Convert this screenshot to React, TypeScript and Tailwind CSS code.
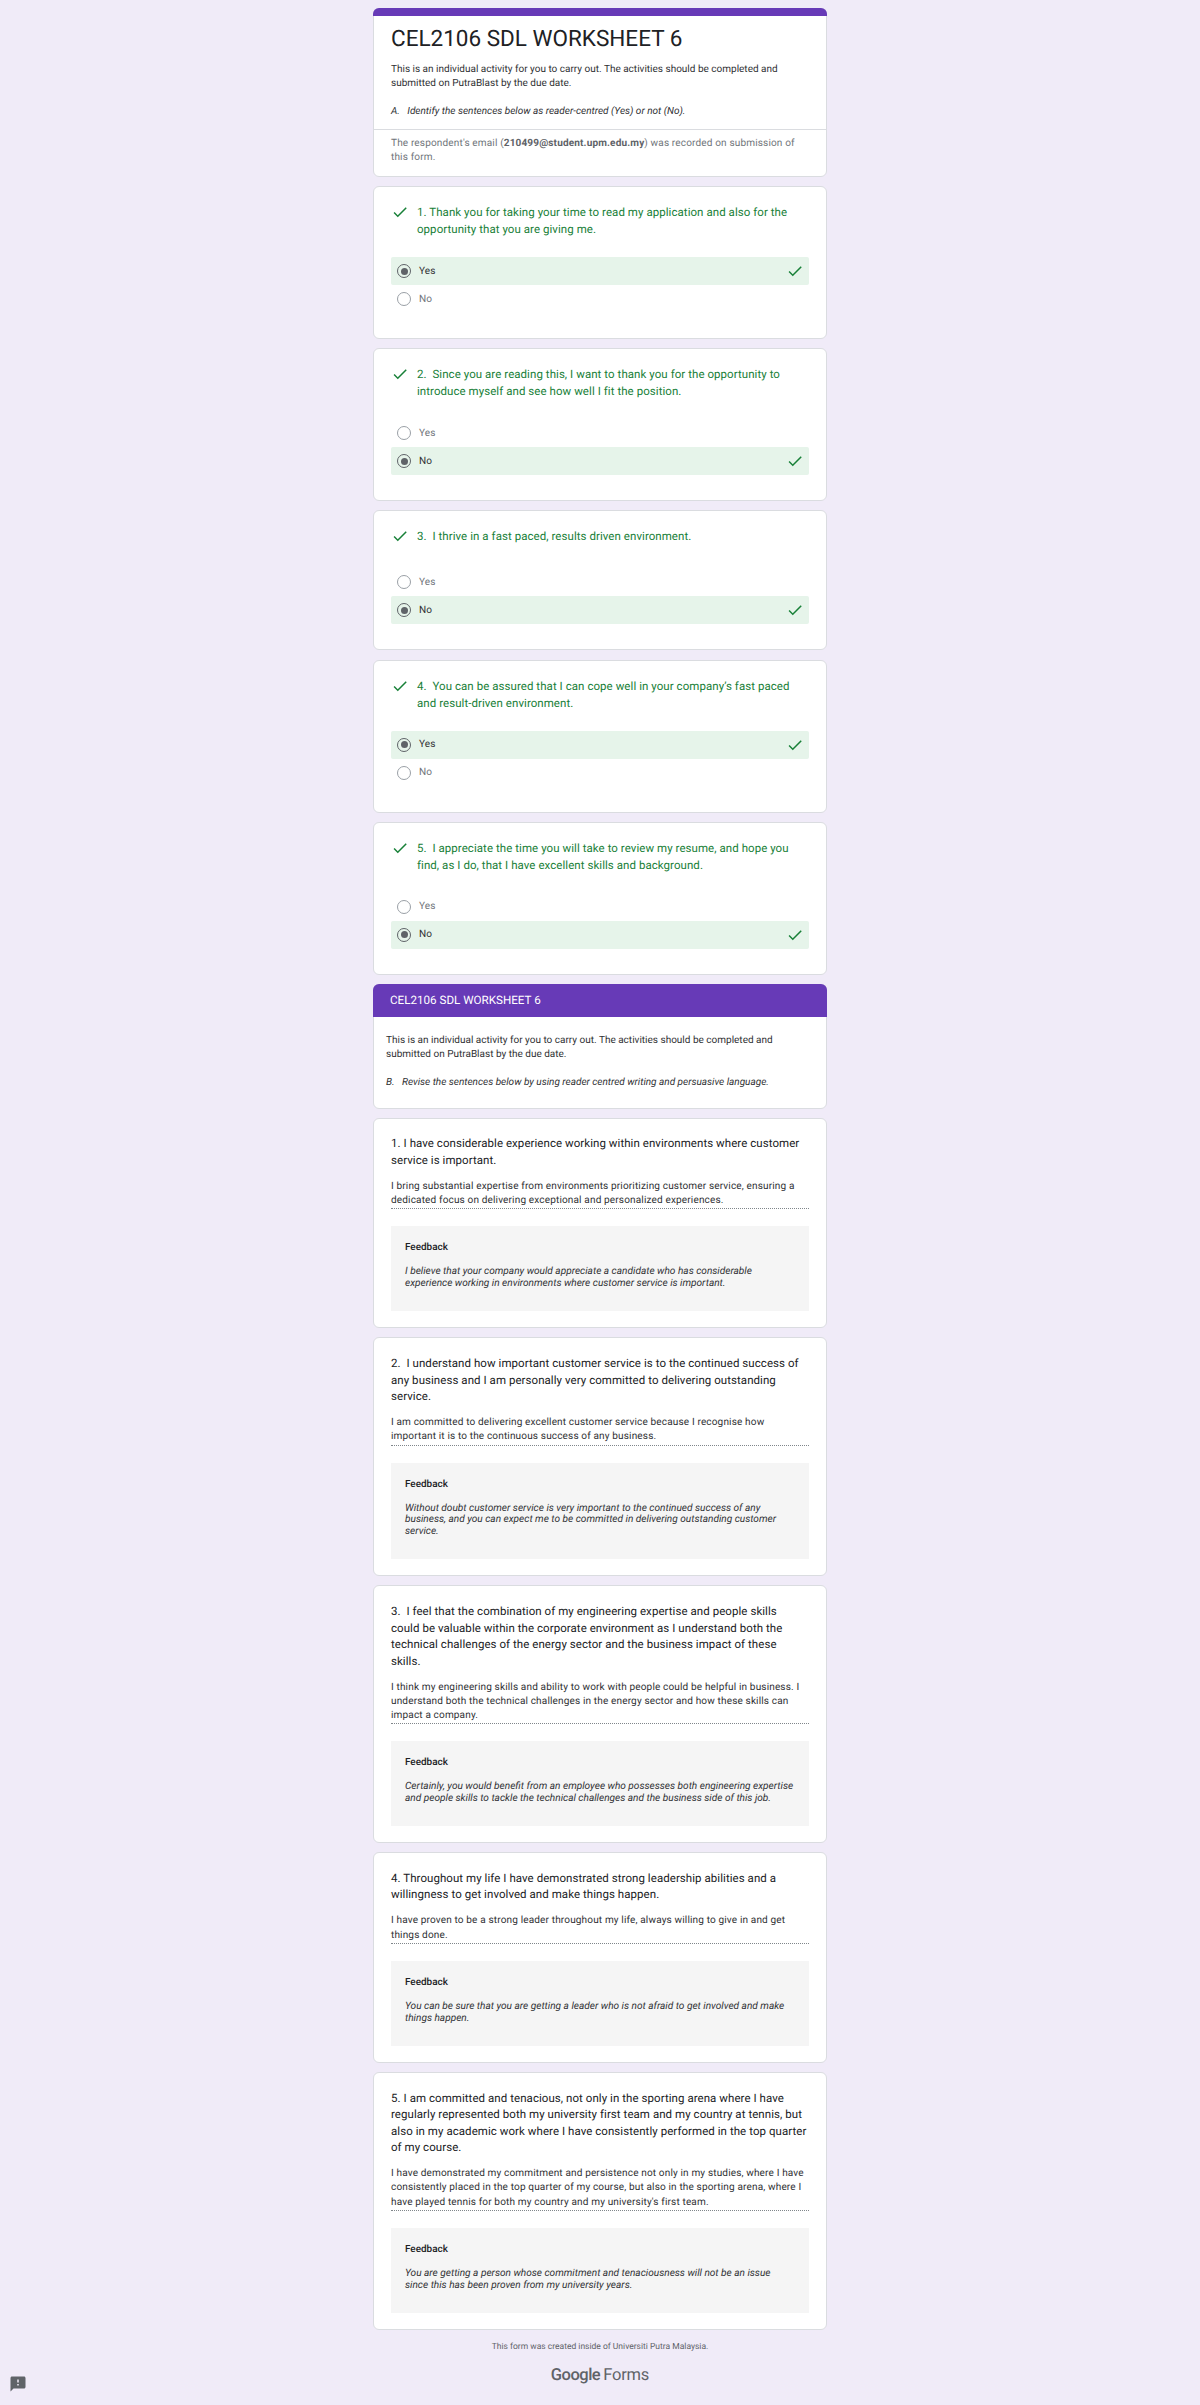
const CheckIcon = ({ className }: { className: string }) => (
  <svg viewBox="0 0 24 24" className={className} fill="#188038">
    <path d="M9 16.17L4.83 12l-1.41 1.41L9 19 21 7l-1.41-1.41z" />
  </svg>
);

const Radio = ({ on }: { on: boolean }) => (
  <span
    className={`flex h-[14px] w-[14px] shrink-0 items-center justify-center rounded-full border-[1.5px] ${
      on ? "border-[#5f6368]" : "border-[#9aa0a6]"
    }`}
  >
    {on && <span className="h-[7px] w-[7px] rounded-full bg-[#5f6368]" />}
  </span>
);

const Option = ({ label, on }: { label: string; on: boolean }) => (
  <div className={`flex h-[28px] items-center rounded-[2px] pl-[6px] pr-[5px] ${on ? "bg-[#e6f4ea]" : ""}`}>
    <Radio on={on} />
    <span className={`ml-[8px] mt-[1px] flex-1 text-[10.05px] leading-[14px] tracking-[0.14px] ${on ? "text-[#303134]" : "text-[#70757a]"}`}>{label}</span>
    {on && <CheckIcon className="h-[18px] w-[18px]" />}
  </div>
);

const quiz = [
  { q: "1. Thank you for taking your time to read my application and also for the opportunity that you are giving me.", a: "Yes", cls: "mt-[19px]" },
  { q: "2.  Since you are reading this, I want to thank you for the opportunity to introduce myself and see how well I fit the position.", a: "No", cls: "mt-[19px]" },
  { q: "3.  I thrive in a fast paced, results driven environment.", a: "No", cls: "mt-[23px]" },
  { q: "4.  You can be assured that I can cope well in your company’s fast paced and result-driven environment.", a: "Yes", cls: "mt-[19px]" },
  { q: "5.  I appreciate the time you will take to review my resume, and hope you find, as I do, that I have excellent skills and background.", a: "No", cls: "mt-[19px]" },
];

const written = [
  {
    q: "1. I have considerable experience working within environments where customer service is important.",
    a: "I bring substantial expertise from environments prioritizing customer service, ensuring a dedicated focus on delivering exceptional and personalized experiences.",
    f: "I believe that your company would appreciate a candidate who has considerable experience working in environments where customer service is important.",
  },
  {
    q: "2.  I understand how important customer service is to the continued success of any business and I am personally very committed to delivering outstanding service.",
    a: "I am committed to delivering excellent customer service because I recognise how important it is to the continuous success of any business.",
    f: "Without doubt customer service is very important to the continued success of any business, and you can expect me to be committed in delivering outstanding customer service.",
  },
  {
    q: "3.  I feel that the combination of my engineering expertise and people skills\ncould be valuable within the corporate environment as I understand both the\ntechnical challenges of the energy sector and the business impact of these\nskills.",
    a: "I think my engineering skills and ability to work with people could be helpful in business. I understand both the technical challenges in the energy sector and how these skills can impact a company.",
    f: "Certainly, you would benefit from an employee who possesses both engineering expertise and people skills to tackle the technical challenges and the business side of this job.",
  },
  {
    q: "4. Throughout my life I have demonstrated strong leadership abilities and a willingness to get involved and make things happen.",
    a: "I have proven to be a strong leader throughout my life, always willing to give in and get things done.",
    f: "You can be sure that you are getting a leader who is not afraid to get involved and make things happen.",
  },
  {
    q: "5. I am committed and tenacious, not only in the sporting arena where I have regularly represented both my university first team and my country at tennis, but also in my academic work where I have consistently performed in the top quarter of my course.",
    a: "I have demonstrated my commitment and persistence not only in my studies, where I have consistently placed in the top quarter of my course, but also in the sporting arena, where I have played tennis for both my country and my university's first team.",
    f: "You are getting a person whose commitment and tenaciousness will not be an issue since this has been proven from my university years.",
  },
];

const card = "rounded-[6px] border border-[#dadce0] bg-white";

export default function App() {
  return (
    <div className="relative min-h-[2405px] bg-[#f0ebf8] font-['Roboto',sans-serif] text-[#202124] [text-rendering:geometricPrecision]">
      <div className="mx-auto flex w-[454px] flex-col gap-[9.15px] pt-[8px]">
        <div className={card}>
          <div className="-mx-px -mt-px h-[8px] rounded-t-[6px] bg-[#673ab7]" />
          <div className="px-[17px] pt-[8px]">
            <h1 className="text-[22.5px] leading-[30px]">CEL2106 SDL WORKSHEET 6</h1>
            <div className="mt-[9px] text-[10px] leading-[14.2px] text-[#303134]">
              <p>This is an individual activity for you to carry out. The activities should be completed and submitted on PutraBlast by the due date.</p>
              <p className="mt-[13.6px] italic">A.&nbsp;&nbsp; Identify the sentences below as reader-centred (Yes) or not (No).</p>
            </div>
          </div>
          <div className="mt-[9.8px] border-t border-[#dadce0] px-[17px] pb-[10.6px] pt-[7px] text-[10.05px] leading-[14.2px] tracking-[0.14px] text-[#70757a]">
            The respondent's email (<b className="font-bold text-[#5f6368]">210499@student.upm.edu.my</b>) was recorded on submission of this form.
          </div>
        </div>

        {quiz.map((item) => (
          <div key={item.q} className={`${card} px-[17px] pb-[25px] pt-[17px]`}>
            <div className="flex text-[11.48px] leading-[17px] text-[#188038]">
              <CheckIcon className="mt-[-1px] h-[18px] w-[18px] shrink-0" />
              <p className="ml-[8px] whitespace-pre-wrap tracking-[0.07px]">{item.q}</p>
            </div>
            <div className={item.cls}>
              <Option label="Yes" on={item.a === "Yes"} />
              <Option label="No" on={item.a === "No"} />
            </div>
          </div>
        ))}

        <div className={card}>
          <div className="-mx-px -mt-px flex h-[33px] items-center rounded-t-[6px] bg-[#673ab7] px-[17px] text-[11.65px] text-white">CEL2106 SDL WORKSHEET 6</div>
          <div className="px-[12px] pb-[17.5px] pt-[17px] text-[10px] leading-[14.2px] text-[#303134]">
            <p>This is an individual activity for you to carry out. The activities should be completed and submitted on PutraBlast by the due date.</p>
            <p className="mt-[13.6px] italic">B.&nbsp;&nbsp; Revise the sentences below by using reader centred writing and persuasive language.</p>
          </div>
        </div>

        {written.map((item) => (
          <div key={item.q} className={`${card} px-[17px] pb-[16px] pt-[16.7px]`}>
            <p className="whitespace-pre-wrap text-[11.48px] leading-[16.5px] tracking-[0.07px]">{item.q}</p>
            <p className="mt-[11.5px] border-b border-dotted border-[#80868b] text-[10.05px] leading-[14.2px] tracking-[0.14px] text-[#303134]">{item.a}</p>
            <div className="mt-[17px] bg-[#f5f5f5] pb-[21.6px] pl-[14px] pr-[15px] pt-[15px]">
              <p className="text-[9.94px] font-medium leading-[14px]">Feedback</p>
              <p className="mt-[11px] text-[10.1px] italic leading-[11.7px] text-[#303134]">{item.f}</p>
            </div>
          </div>
        ))}
      </div>

      <p className="mt-[11px] text-center text-[8.5px] leading-[12px] text-[#5f6368]">This form was created inside of Universiti Putra Malaysia.</p>
      <div className="mt-[11px] flex items-baseline justify-center text-[16.5px] leading-[24px] text-[#5f6368]">
        <span className="font-medium tracking-[-0.5px]">Google</span>
        <span className="ml-[3px] tracking-[-0.2px]">Forms</span>
      </div>

      <svg viewBox="0 0 24 24" className="absolute left-[8.5px] top-[2375px] h-[18px] w-[18px]" fill="#5f6368">
        <path d="M20 2H4c-1.1 0-1.99.9-1.99 2L2 22l4-4h14c1.1 0 2-.9 2-2V4c0-1.1-.9-2-2-2zm-7 12h-2v-2h2v2zm0-4h-2V6h2v4z" />
      </svg>
    </div>
  );
}
